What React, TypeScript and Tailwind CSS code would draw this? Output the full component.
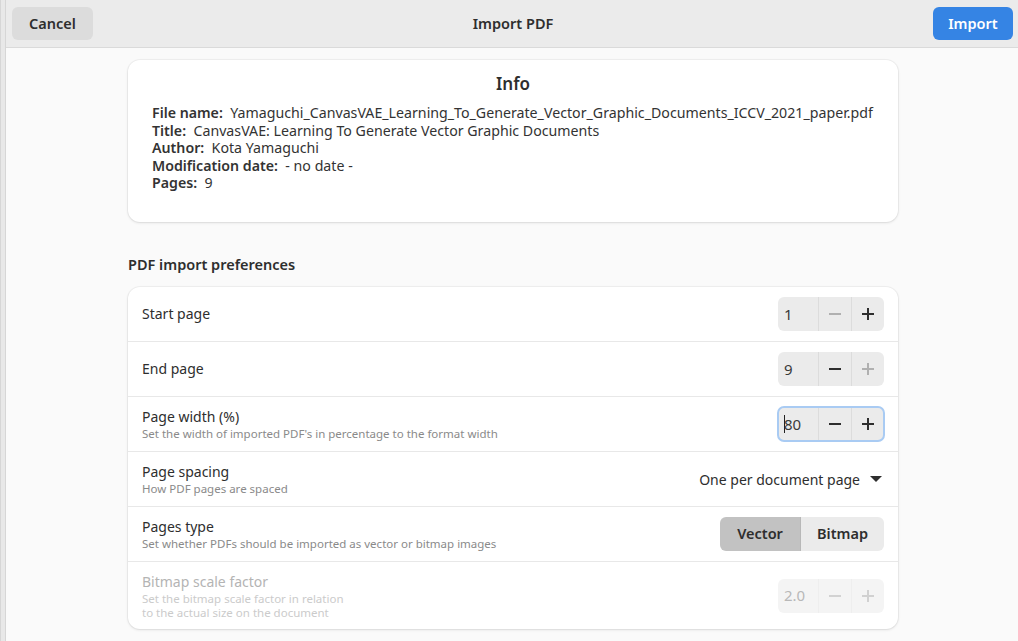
import React from "react";

function Spin({ value, minusOff, plusOff, focused, disabled }: { value: string; minusOff?: boolean; plusOff?: boolean; focused?: boolean; disabled?: boolean }) {
  const on = disabled ? "text-[#c4c4c4]" : "text-[#2e2e2e]";
  const off = "text-[#b0b0b0]";
  return (
    <div
      className={`flex h-[34px] w-[106px] rounded-[6px] ${disabled ? "bg-[#f4f4f4]" : "bg-[#ebebeb]"} ${focused ? "outline-2 outline-[#a9cbf3] -outline-offset-1" : ""}`}
    >
      <div className={`flex w-[40px] items-center pl-[6px] text-[15px] ${disabled ? "text-[#b8b8b8]" : "text-[#3a3a3a]"}`}>
        {focused && <span className="mr-[-1px] h-[18px] w-[1px] bg-[#222]" />}
        {value}
      </div>
      <div className={`flex w-[33px] items-center justify-center border-l ${disabled ? "border-[#eeeeee]" : "border-[#dcdcdc]"} ${minusOff || disabled ? off : on}`}>
        <svg width="12" height="12" viewBox="0 0 12 12">
          <rect x="0" y="5" width="12" height="2" fill="currentColor" opacity={disabled ? 0.5 : 1} />
        </svg>
      </div>
      <div className={`flex w-[33px] items-center justify-center border-l ${disabled ? "border-[#eeeeee]" : "border-[#dcdcdc]"} ${plusOff || disabled ? off : on}`}>
        <svg width="12" height="12" viewBox="0 0 12 12">
          <g fill="currentColor" opacity={disabled ? 0.5 : 1}>
            <rect x="0" y="5" width="12" height="2" />
            <rect x="5" y="0" width="2" height="12" />
          </g>
        </svg>
      </div>
    </div>
  );
}

function Row({ title, sub, children, disabled, last, tall }: { title: string; sub?: string[]; children: React.ReactNode; disabled?: boolean; last?: boolean; tall?: boolean }) {
  return (
    <div className={`flex items-center justify-between pl-[14px] pr-[14px] ${tall ? "h-[67px]" : "h-[55px]"} ${last ? "" : "border-b border-[#e8e8e8]"}`}>
      <div className="flex flex-col">
        <div className={`text-[14px] leading-[20px] ${disabled ? "text-[#b4b4b4]" : "text-[#2e2e2e]"}`}>{title}</div>
        {sub &&
          sub.map((s) => (
            <div key={s} className={`text-[11.5px] leading-[14px] ${disabled ? "text-[#cbcbcb]" : "text-[#8a8a8a]"}`}>
              {s}
            </div>
          ))}
      </div>
      {children}
    </div>
  );
}

export default function App() {
  return (
    <div className="flex h-[641px] w-[1018px] overflow-hidden bg-[#fafafa] text-[#2e2e2e]" style={{ fontFamily: '"Noto Sans", "Open Sans", sans-serif' }}>
      <div className="w-[6px] shrink-0 border-l border-r border-[#d6d6d6] bg-[#e8e8e8]" />
      <div className="flex flex-1 flex-col">
        <header className="flex h-[48px] shrink-0 items-center justify-between border-b border-[#dadada] bg-[#ebebeb] pl-[6px] pr-[5px]">
          <button className="h-[33px] w-[81px] rounded-[6px] bg-[#dcdcdc] text-[14.5px] font-semibold text-[#2e2e2e]">Cancel</button>
          <div className="text-[14.5px] font-semibold text-[#2e2e2e]">Import PDF</div>
          <button className="h-[33px] w-[80px] rounded-[6px] bg-[#3584e4] text-[14.5px] font-semibold text-white">Import</button>
        </header>
        <main className="flex flex-col pl-[122px] pr-[120px] pt-[12px]">
          <section className="flex h-[162px] flex-col rounded-[12px] bg-white px-[24px] pt-[13px] shadow-[0_0_0_1px_rgba(0,0,0,0.04),0_1px_3px_rgba(0,0,0,0.10)]">
            <h2 className="text-center text-[17px] font-semibold leading-[22px]">Info</h2>
            <div className="mt-[9px] flex flex-col text-[14.2px] leading-[17.5px] text-[#333]">
              <div><span className="font-semibold">File name:</span>&nbsp; Yamaguchi_CanvasVAE_Learning_To_Generate_Vector_Graphic_Documents_ICCV_2021_paper.pdf</div>
              <div><span className="font-semibold">Title:</span>&nbsp; CanvasVAE: Learning To Generate Vector Graphic Documents</div>
              <div><span className="font-semibold">Author:</span>&nbsp; Kota Yamaguchi</div>
              <div><span className="font-semibold">Modification date:</span>&nbsp; - no date -</div>
              <div><span className="font-semibold">Pages:</span>&nbsp; 9</div>
            </div>
          </section>
          <h3 className="mt-[32px] text-[14.5px] font-semibold leading-[20px]">PDF import preferences</h3>
          <section className="mt-[13px] flex flex-col rounded-[12px] bg-white shadow-[0_0_0_1px_rgba(0,0,0,0.04),0_1px_3px_rgba(0,0,0,0.10)]">
            <Row title="Start page">
              <Spin value="1" minusOff />
            </Row>
            <Row title="End page">
              <Spin value="9" plusOff />
            </Row>
            <Row title="Page width (%)" sub={["Set the width of imported PDF's in percentage to the format width"]}>
              <Spin value="80" focused />
            </Row>
            <Row title="Page spacing" sub={["How PDF pages are spaced"]}>
              <div className="flex items-center gap-[10px] pr-[2px] text-[14px] text-[#2e2e2e]">
                One per document page
                <svg width="12" height="8" viewBox="0 0 12 8">
                  <path d="M0 1 L12 1 L6 7 Z" fill="#2e2e2e" />
                </svg>
              </div>
            </Row>
            <Row title="Pages type" sub={["Set whether PDFs should be imported as vector or bitmap images"]}>
              <div className="flex h-[34px] overflow-hidden rounded-[6px] text-[14.5px] font-semibold text-[#2e2e2e]">
                <div className="flex w-[81px] items-center justify-center border-r border-[#b8b8b8] bg-[#c2c2c2]">Vector</div>
                <div className="flex w-[83px] items-center justify-center bg-[#ebebeb]">Bitmap</div>
              </div>
            </Row>
            <Row title="Bitmap scale factor" sub={["Set the bitmap scale factor in relation", "to the actual size on the document"]} disabled last tall>
              <Spin value="2.0" disabled />
            </Row>
          </section>
        </main>
      </div>
    </div>
  );
}
